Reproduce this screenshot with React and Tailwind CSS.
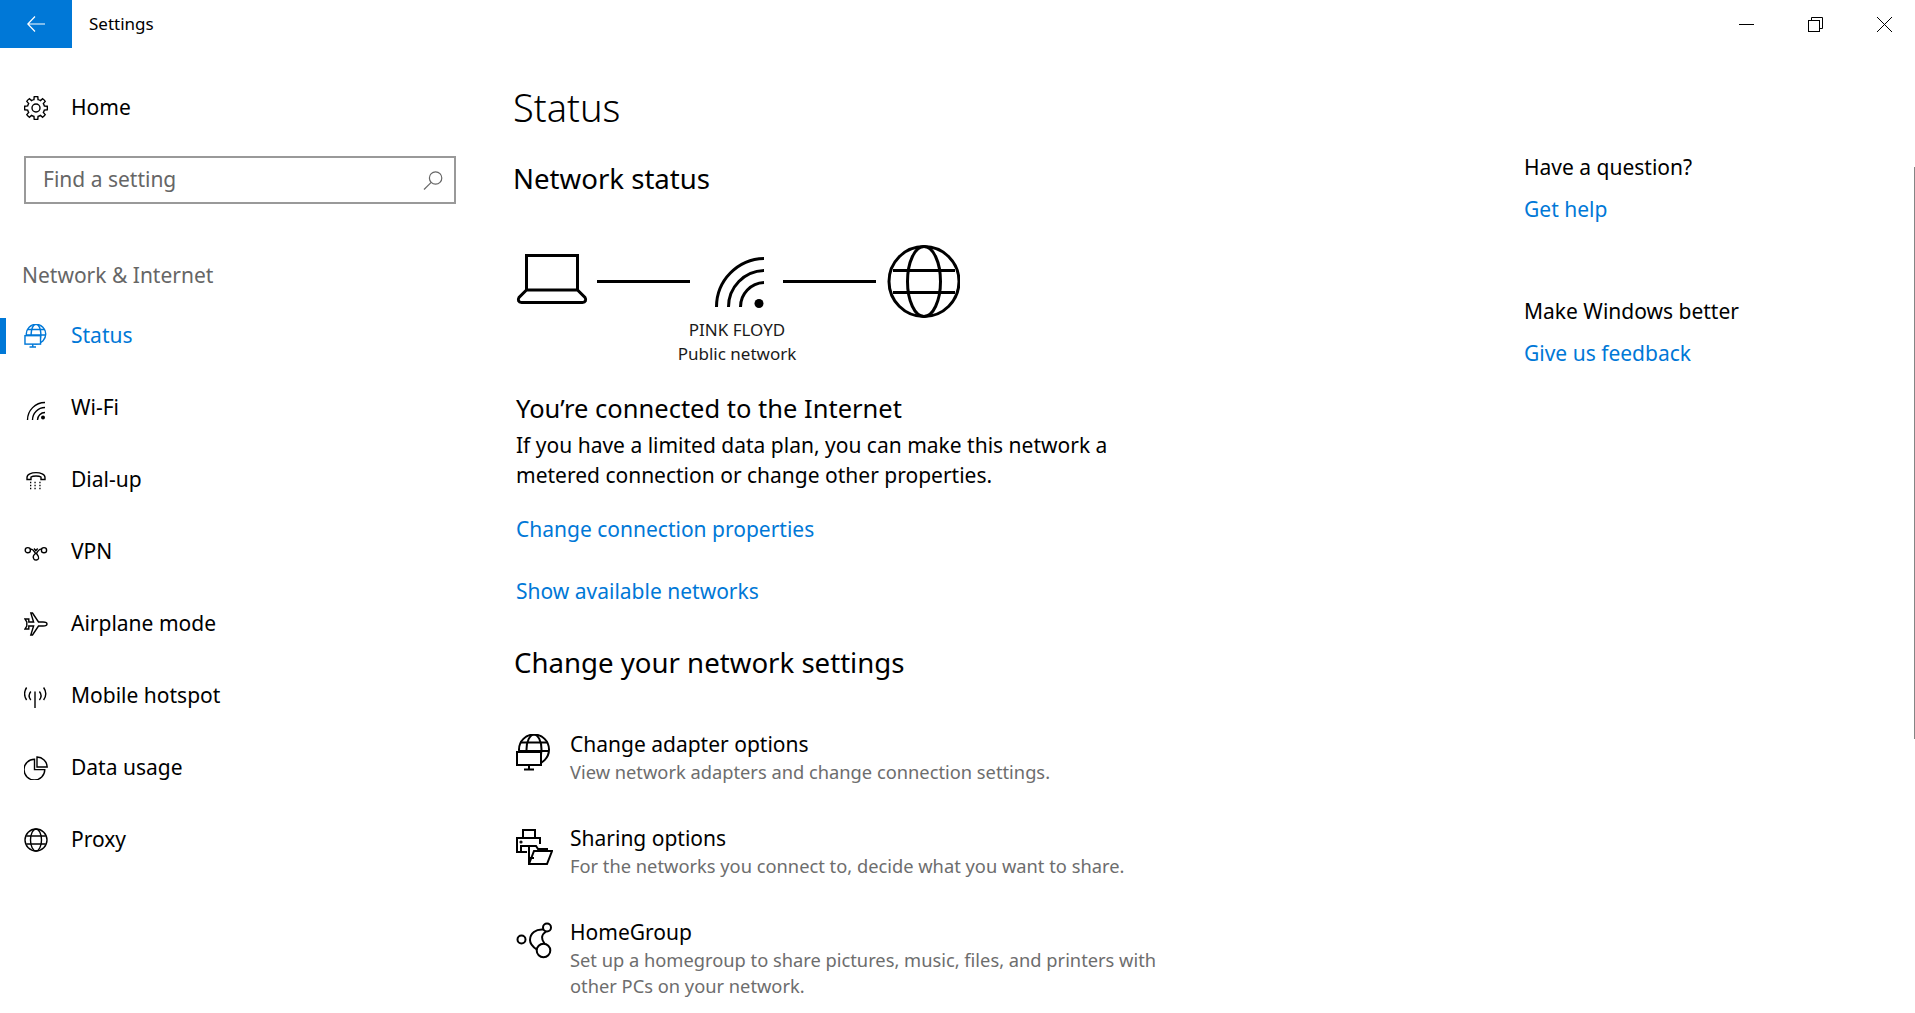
import React from 'react';

const gearPath = (() => {
  const pts = [];
  for (let i = 0; i < 8; i++) {
    const a = (i * Math.PI) / 4;
    const at = (r, d) => [(12 + r * Math.cos(a + d)).toFixed(2), (12 + r * Math.sin(a + d)).toFixed(2)].join(' ');
    pts.push(`${i === 0 ? 'M' : 'A8.6 8.6 0 0 1'} ${at(8.6, -0.24)}`);
    pts.push(`L${at(11.4, -0.16)} A11.4 11.4 0 0 1 ${at(11.4, 0.16)} L${at(8.6, 0.24)}`);
  }
  return pts.join(' ') + ' A8.6 8.6 0 0 1 ' + `${(12 + 8.6 * Math.cos(-0.24)).toFixed(2)} ${(12 + 8.6 * Math.sin(-0.24)).toFixed(2)} Z`;
})();

const Ico = ({ children, className = 'text-black', w = 24, h = 24, sw = 1.4 }) => (
  <svg viewBox={`0 0 ${w} ${h}`} width={w} height={h} fill="none" stroke="currentColor" strokeWidth={sw} className={`shrink-0 ${className}`}>
    {children}
  </svg>
);

const AdapterGlyph = () => (
  <>
    <circle cx="18" cy="15.5" r="15" />
    <ellipse cx="18" cy="15.5" rx="7.5" ry="15" />
    <path d="M4.5 8.5H31.5M3 17H33" />
    <rect x="1" y="18" width="24" height="13" fill="white" />
    <path d="M13 31V35M8 35.5H18" />
  </>
);

const menuItems = [
  {
    name: 'Status',
    active: true,
    icon: (
      <svg viewBox="0 0 36 37" width="24" height="24" fill="none" stroke="currentColor" strokeWidth="2.2" className="shrink-0 text-[#0078d7]">
        <AdapterGlyph />
      </svg>
    ),
  },
  {
    name: 'Wi-Fi',
    icon: (
      <Ico>
        <path d="M3.5 24A17.5 17.5 0 0 1 21 6.5M8.5 24A12.5 12.5 0 0 1 21 11.5M13.5 24A7.5 7.5 0 0 1 21 16.5" />
        <circle cx="19" cy="21.5" r="2" fill="currentColor" stroke="none" />
      </Ico>
    ),
  },
  {
    name: 'Dial-up',
    icon: (
      <Ico>
        <path d="M3 11.5V9.5C3 3 21 3 21 9.5V11.5H17V9C15 7.6 9 7.6 7 9V11.5Z" />
        <path d="M6 14.5H7.3M10.4 14.5H11.7M15.3 14.5H16.6M6 17.5H7.3M10.4 17.5H11.7M15.3 17.5H16.6M6 20.5H7.3M10.4 20.5H11.7M15.3 20.5H16.6" />
      </Ico>
    ),
  },
  {
    name: 'VPN',
    icon: (
      <Ico>
        <circle cx="3.8" cy="10.2" r="2.6" />
        <circle cx="20" cy="10.2" r="2.6" />
        <path d="M6.2 9.2C9 8.6 10 11 11.5 13.5C9.5 15 8.7 17 9.8 18.8C11 20.6 14 20.4 14.6 18.4C15.2 16.6 13.5 15 12.4 13.5C13.5 11.5 15 8.6 17.6 9.2" />
        <path d="M10 8.5L11.8 10.6L13.7 8.5" />
      </Ico>
    ),
  },
  {
    name: 'Airplane mode',
    icon: (
      <Ico>
        <path d="M23 12C23 10.6 21 10 19 10H14.5L8.5 1H6.8L9.6 10H4.8V7H1L2.8 10V14L1 17H4.8V14H9.6L6.8 23H8.5L14.5 14H19C21 14 23 13.4 23 12Z" />
      </Ico>
    ),
  },
  {
    name: 'Mobile hotspot',
    icon: (
      <Ico>
        <path d="M11 7.5V24" />
        <path d="M6.8 7.5C4.8 10 4.8 13.5 6.8 16M15.4 7.5C17.4 10 17.4 13.5 15.4 16" />
        <path d="M2.6 3.5C0 7.5 0 12 2.6 16M19.6 3.5C22.4 7.5 22.4 12 19.6 16" />
      </Ico>
    ),
  },
  {
    name: 'Data usage',
    icon: (
      <Ico>
        <path d="M10.5 3.2A10.4 10.4 0 1 0 20.8 13.6H10.5Z" />
        <path d="M13 1A10.4 10.4 0 0 1 23.2 11H13Z" />
      </Ico>
    ),
  },
  {
    name: 'Proxy',
    icon: (
      <Ico>
        <circle cx="12" cy="12" r="11" />
        <ellipse cx="12" cy="12" rx="5.5" ry="11" />
        <path d="M2.2 8H21.8M2.2 16H21.8" />
      </Ico>
    ),
  },
];

const changeItems = [
  {
    title: 'Change adapter options',
    lines: ['View network adapters and change connection settings.'],
    mt: 'mt-[50px]',
    icon: (
      <svg viewBox="0 0 36 37" width="36" height="37" fill="none" stroke="currentColor" strokeWidth="2" className="shrink-0 -mt-[1px]">
        <AdapterGlyph />
      </svg>
    ),
  },
  {
    title: 'Sharing options',
    lines: ['For the networks you connect to, decide what you want to share.'],
    mt: 'mt-[39px]',
    icon: (
      <svg viewBox="0 0 37 37" width="37" height="37" fill="none" stroke="currentColor" strokeWidth="2" className="shrink-0 -mt-[1px]">
        <path d="M7 10V2H19V10" />
        <path d="M11 24H1V10H24V16" />
        <path d="M5 24V18H13" />
        <path d="M13 17V30H18" />
        <path d="M13 36L18 23H36L31 36H13V18H20L22 21H31V23" />
        <circle cx="5" cy="14" r="0.6" fill="currentColor" />
      </svg>
    ),
  },
  {
    title: 'HomeGroup',
    lines: ['Set up a homegroup to share pictures, music, files, and printers with', 'other PCs on your network.'],
    mt: 'mt-[39px]',
    icon: (
      <svg viewBox="0 0 37 37" width="37" height="37" fill="none" stroke="currentColor" strokeWidth="2" className="shrink-0 -mt-[1px]">
        <circle cx="5.5" cy="17.5" r="4" />
        <circle cx="31" cy="5.5" r="4" />
        <circle cx="27.5" cy="28.5" r="6.8" />
        <path d="M27 7.5C20 7 14 11 14 18C14 21 15.5 24 20.8 27.5" />
        <path d="M30 9.5C25 13 25 17 28.5 21.6" />
      </svg>
    ),
  },
];

const App = () => {
  return (
    <div className="relative w-[1915px] h-[1013px] overflow-hidden bg-white text-black text-[21px] font-['Noto_Sans',sans-serif]">
      {/* Title bar */}
      <div className="flex items-center h-12">
        <div className="flex items-center justify-center w-[72px] h-12 bg-[#0078d7]">
          <svg viewBox="0 0 18 16" width="18" height="16" fill="none" stroke="white" strokeWidth="1.2">
            <path d="M8 0.5L0.8 8L8 15.5M0.8 8H18" />
          </svg>
        </div>
        <span className="ml-[17px] text-[17px]">Settings</span>
        <div className="flex items-center gap-[54px] ml-auto pr-[23px]">
          <svg viewBox="0 0 15 15" width="15" height="15" fill="none" stroke="black" strokeWidth="1"><path d="M0 7.5H15" /></svg>
          <svg viewBox="0 0 15 15" width="15" height="15" fill="none" stroke="black" strokeWidth="1">
            <rect x="0.5" y="3.5" width="11" height="11" />
            <path d="M3.5 3.5V0.5H14.5V11.5H11.5" />
          </svg>
          <svg viewBox="0 0 15 15" width="15" height="15" fill="none" stroke="black" strokeWidth="1"><path d="M0 0L15 15M15 0L0 15" /></svg>
        </div>
      </div>

      <div className="flex">
        {/* Sidebar */}
        <div className="w-[514px] shrink-0">
          <div className="flex items-center gap-[23px] h-12 mt-9 pl-6">
            <svg viewBox="0 0 24 24" width="24" height="24" fill="none" stroke="black" strokeWidth="1.4" className="shrink-0">
              <path d={gearPath} />
              <circle cx="12" cy="12" r="4" />
            </svg>
            <span>Home</span>
          </div>

          <div className="flex items-center justify-between w-[432px] h-12 mt-6 ml-6 pl-[17px] pr-[11px] border-2 border-[#999999] text-[#666666]">
            <span>Find a setting</span>
            <svg viewBox="0 0 20 19" width="20" height="19" fill="none" stroke="#666666" strokeWidth="1.2">
              <circle cx="12.6" cy="7" r="6.2" />
              <path d="M8.2 11.4L1 18.5" />
            </svg>
          </div>

          <div className="flex items-center h-12 mt-12 pl-[22px] text-[#666666]">Network &amp; Internet</div>

          <nav className="flex flex-col">
            {menuItems.map((item) => (
              <div key={item.name} className={`relative flex items-center gap-[23px] h-[72px] pl-6 ${item.active ? 'text-[#0078d7]' : ''}`}>
                {item.active && <div className="absolute left-0 top-[18px] w-[6px] h-9 bg-[#0078d7]" />}
                {item.icon}
                <span>{item.name}</span>
              </div>
            ))}
          </nav>
        </div>

        {/* Main content */}
        <div className="flex-1">
          <h1 className="h-12 mt-[35px] text-[38px] leading-[48px] font-light -ml-[1px]">Status</h1>
          <h2 className="h-9 mt-[29px] text-[27.6px] leading-9 -ml-[1px]">Network status</h2>

          <div className="mt-[47px] w-[446px]">
            <svg viewBox="0 0 446 76" width="446" height="76" fill="none" stroke="black" strokeWidth="3" className="block">
              <path d="M12.5 47V12.5H63.5V47" />
              <path d="M12.5 47H63.5L71 54.5C72.5 57 71.5 59.5 68.5 59.5H7.5C4.5 59.5 3.5 57 5 54.5Z" />
              <path d="M83 38.5H176M269 38.5H362" />
              <path d="M202.5 64A48.5 48.5 0 0 1 250 15.5M214.5 64A36.5 36.5 0 0 1 250 27.5M226.5 64A24.5 24.5 0 0 1 250 39.5" />
              <circle cx="245" cy="60.5" r="4.5" fill="black" stroke="none" />
              <circle cx="410" cy="38.5" r="35" />
              <ellipse cx="410" cy="38.5" rx="16.5" ry="35" />
              <path d="M379 27.5H441M379 49.5H441" />
            </svg>
            <div className="-mt-[1px] text-center text-[17px] leading-6 text-[#1a1a1a]">
              <div>PINK FLOYD</div>
              <div>Public network</div>
            </div>
          </div>

          <div className="ml-[2px]">
            <div className="h-8 mt-[26px] text-[25.5px] leading-8">You’re connected to the Internet</div>
            <p className="mt-[6px] leading-[30px] whitespace-nowrap">
              If you have a limited data plan, you can make this network a<br />
              metered connection or change other properties.
            </p>
            <div className="mt-[24px] leading-[30px] text-[#0078d7]">Change connection properties</div>
            <div className="mt-[32px] leading-[30px] text-[#0078d7]">Show available networks</div>
          </div>

          <h2 className="h-9 mt-[38px] text-[27.6px] leading-9">Change your network settings</h2>

          {changeItems.map((item) => (
            <div key={item.title} className={`flex ml-[2px] ${item.mt}`}>
              <div className="w-[54px] shrink-0 pt-[5px]">{item.icon}</div>
              <div>
                <div className="h-7 leading-7">{item.title}</div>
                <div className="mt-[1px] text-[18.3px] leading-[26px] text-[#6d6d6d] whitespace-nowrap">
                  {item.lines.map((line) => (
                    <div key={line}>{line}</div>
                  ))}
                </div>
              </div>
            </div>
          ))}
        </div>

        {/* Right column */}
        <div className="w-[391px] shrink-0 pt-[104px] leading-[30px]">
          <div>Have a question?</div>
          <div className="mt-3 text-[#0078d7]">Get help</div>
          <div className="mt-[72px]">Make Windows better</div>
          <div className="mt-3 text-[#0078d7]">Give us feedback</div>
        </div>
      </div>

      {/* Scrollbar thumb */}
      <div className="absolute right-0 top-[167px] w-[1px] h-[572px] bg-[#858585]" />
    </div>
  );
};

export default App;
